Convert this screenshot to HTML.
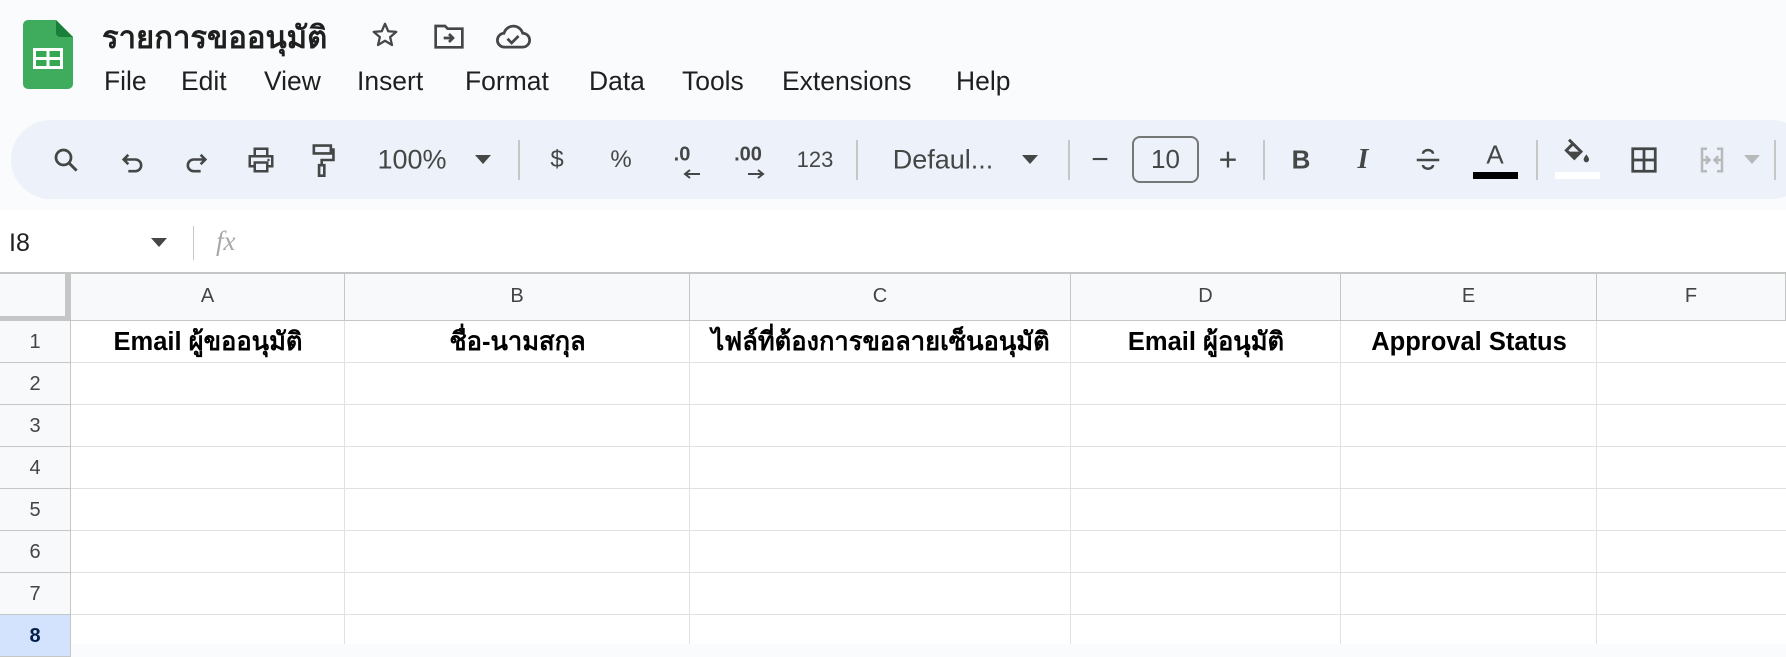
<!DOCTYPE html>
<html><head><meta charset="utf-8"><style>
*{margin:0;padding:0;box-sizing:border-box}
body{width:1786px;height:644px;overflow:hidden;background:#f9fbfd;font-family:"Liberation Sans","Noto Sans CJK SC",sans-serif;position:relative;color:#1f1f1f}
.a{position:absolute}
.menu span{position:absolute;top:66px;font-size:27px;color:#1f1f1f;transform:scaleX(.98);transform-origin:left}
.tb{position:absolute;left:11px;top:120px;width:1800px;height:79px;background:#edf2fa;border-radius:40px}
.ti{position:absolute;top:160px;transform:translate(-50%,-50%);color:#444746;font-size:25px}
.sep{position:absolute;top:140px;width:2px;height:40px;background:#c7c7c7}
svg{display:block}
.grid{position:absolute;left:0;top:272px;width:1786px;height:372px;background:#fff}
.ch{position:absolute;top:0;height:49px;background:#f8f9fa;border-right:1px solid #c4c7c5;border-bottom:1px solid #c4c7c5;text-align:center;line-height:48px;font-size:20px;color:#444}
.rh{position:absolute;left:0;width:71px;height:42px;background:#f8f9fa;border-bottom:1px solid #c4c7c5;border-right:1px solid #c4c7c5;text-align:center;line-height:42px;font-size:20px;color:#444}
.hl{position:absolute;height:1px;background:#e1e1e1;left:71px;right:0}
.vl{position:absolute;width:1px;background:#e1e1e1;top:49px;bottom:0}
.h1{position:absolute;top:49px;height:42px;line-height:42px;text-align:center;font-weight:bold;font-size:25.5px;color:#000}
</style></head><body>
<svg class="a" style="left:23px;top:20px" width="50" height="69" viewBox="0 0 50 69"><path d="M5 0H33L50 17V64a5 5 0 0 1-5 5H5a5 5 0 0 1-5-5V5a5 5 0 0 1 5-5z" fill="#34a853" opacity=".95"/><path d="M33 0L50 17H37a4 4 0 0 1-4-4z" fill="#188038"/><rect x="10" y="28" width="30" height="21" fill="#fff"/><rect x="13" y="31" width="10.5" height="6" fill="#34a853"/><rect x="26.5" y="31" width="10.5" height="6" fill="#34a853"/><rect x="13" y="40" width="10.5" height="6" fill="#34a853"/><rect x="26.5" y="40" width="10.5" height="6" fill="#34a853"/></svg>
<div class="a" style="left:102px;top:12px;font-size:31px;font-weight:bold;color:#1f1f1f">รายการขออนุมัติ</div>
<svg class="a" style="left:370px;top:20px" width="30" height="30" viewBox="0 0 24 24"><path d="M12 3l2.6 6 6.4.5-4.9 4.2 1.5 6.3L12 16.6 6.4 20l1.5-6.3L3 9.5l6.4-.5z" fill="none" stroke="#444746" stroke-width="1.8" stroke-linejoin="round"/></svg>
<svg class="a" style="left:433px;top:22px" width="32" height="28" viewBox="0 0 24 21"><path d="M2 3h7l2 2h11v14H2z" fill="none" stroke="#444746" stroke-width="2"/><path d="M8 12h7M12 9l3 3-3 3" fill="none" stroke="#444746" stroke-width="2"/></svg>
<svg class="a" style="left:495px;top:22px" width="36" height="28" viewBox="0 0 26 20"><path d="M7 18a5 5 0 0 1-.5-10A7 7 0 0 1 20 8a5 5 0 0 1 0 10z" fill="none" stroke="#444746" stroke-width="2"/><path d="M9 12l3 3 5-5" fill="none" stroke="#444746" stroke-width="2"/></svg>
<div class="menu"><span style="left:104px">File</span><span style="left:181px">Edit</span><span style="left:264px">View</span><span style="left:357px">Insert</span><span style="left:465px">Format</span><span style="left:589px">Data</span><span style="left:682px">Tools</span><span style="left:782px">Extensions</span><span style="left:956px">Help</span></div>
<div class="tb"></div>
<svg class="ti" style="left:66px" width="30" height="30" viewBox="0 0 24 24"><circle cx="10" cy="10" r="6" fill="none" stroke="#444746" stroke-width="2.2"/><path d="M14.5 14.5l6 6" stroke="#444746" stroke-width="2.4"/></svg>
<svg class="ti" style="left:133px;top:163px" width="28" height="28" viewBox="0 0 24 24"><path d="M8 5L4 9l4 4M4 9h10a5 5 0 0 1 0 10H8" fill="none" stroke="#444746" stroke-width="2.2"/></svg>
<svg class="ti" style="left:196px;top:163px" width="28" height="28" viewBox="0 0 24 24"><path d="M16 5l4 4-4 4M20 9H10a5 5 0 0 0 0 10h6" fill="none" stroke="#444746" stroke-width="2.2"/></svg>
<svg class="ti" style="left:261px" width="32" height="30" viewBox="0 0 24 24"><path d="M7 8V3h10v5M7 17H3V9h18v8h-4M7 14h10v7H7z" fill="none" stroke="#444746" stroke-width="2"/><circle cx="18" cy="12" r="1" fill="#444746"/></svg>
<svg class="ti" style="left:323px" width="28" height="34" viewBox="0 0 20 26"><path d="M3 2h13v6H3zM16 5h2v8H9v4M7 17h4v8H7z" fill="none" stroke="#444746" stroke-width="2"/></svg>
<div class="ti" style="left:412px;font-size:27px">100%</div>
<svg class="ti" style="left:483px" width="16" height="10" viewBox="0 0 16 10"><path d="M0 0h16L8 9z" fill="#444746"/></svg>
<div class="sep" style="left:518px"></div>
<div class="ti" style="left:557px;font-size:24px">$</div>
<div class="ti" style="left:621px;font-size:24px">%</div>
<div class="ti" style="left:682px;font-size:20px;font-weight:bold;top:155px">.0</div>
<svg class="ti" style="left:692px;top:174px" width="18" height="10" viewBox="0 0 18 10"><path d="M17 5H3M7 1L2 5l5 4" fill="none" stroke="#444746" stroke-width="2"/></svg>
<div class="ti" style="left:748px;font-size:20px;font-weight:bold;top:155px">.00</div>
<svg class="ti" style="left:756px;top:174px" width="18" height="10" viewBox="0 0 18 10"><path d="M1 5h14M11 1l5 4-5 4" fill="none" stroke="#444746" stroke-width="2"/></svg>
<div class="ti" style="left:815px;font-size:22px">123</div>
<div class="sep" style="left:856px"></div>
<div class="ti" style="left:943px;font-size:27px">Defaul...</div>
<svg class="ti" style="left:1030px" width="16" height="10" viewBox="0 0 16 10"><path d="M0 0h16L8 9z" fill="#444746"/></svg>
<div class="sep" style="left:1068px"></div>
<div class="ti" style="left:1100px;font-size:30px">−</div>
<div class="a" style="left:1132px;top:136px;width:67px;height:47px;border:2px solid #747775;border-radius:8px;text-align:center;line-height:43px;font-size:26px;color:#444746">10</div>
<div class="ti" style="left:1228px;font-size:32px">+</div>
<div class="sep" style="left:1263px"></div>
<div class="ti" style="left:1301px;font-size:26px;font-weight:bold">B</div>
<div class="ti" style="left:1363px;font-size:28px;font-weight:bold;font-style:italic;font-family:'Liberation Serif',serif">I</div>
<svg class="ti" style="left:1428px" width="30" height="30" viewBox="0 0 24 24"><path d="M3 12h18M8 7a4 3 0 0 1 8 0M8 16a4 3 0 0 0 8 0" fill="none" stroke="#444746" stroke-width="2"/></svg>
<div class="ti" style="left:1495px;font-size:26px;top:155px">A</div>
<div class="a" style="left:1473px;top:172px;width:45px;height:7px;background:#000"></div>
<div class="sep" style="left:1536px"></div>
<svg class="ti" style="left:1577px;top:153px" width="32" height="32" viewBox="0 0 24 24"><path d="M6 2l9 9-5 5-6-6 5-5" fill="none" stroke="#444746" stroke-width="2.2"/><path d="M5 11h11l-6 5z" fill="#444746"/><path d="M19 13c1.5 2 2 3 2 4a2 2 0 0 1-4 0c0-1 .5-2 2-4z" fill="#444746"/></svg>
<div class="a" style="left:1555px;top:172px;width:45px;height:7px;background:#fff"></div>
<svg class="ti" style="left:1644px" width="30" height="30" viewBox="0 0 24 24"><path d="M3 3h18v18H3zM12 3v18M3 12h18" fill="none" stroke="#444746" stroke-width="2.2"/></svg>
<svg class="ti" style="left:1712px" width="30" height="30" viewBox="0 0 24 24"><path d="M8 3H4v18h4M16 3h4v18h-4M4 12h6M7 9l3 3-3 3M20 12h-6M17 9l-3 3 3 3" fill="none" stroke="#b7b9bb" stroke-width="2"/></svg>
<svg class="ti" style="left:1752px" width="16" height="10" viewBox="0 0 16 10"><path d="M0 0h16L8 9z" fill="#b7b9bb"/></svg>
<div class="sep" style="left:1774px"></div>
<div class="a" style="left:0;top:210px;width:1786px;height:62px;background:#fff"></div>
<div class="a" style="left:9px;top:229px;font-size:25px;color:#1f1f1f">I8</div>
<svg class="a" style="left:151px;top:238px" width="16" height="10" viewBox="0 0 16 10"><path d="M0 0h16L8 9z" fill="#444746"/></svg>
<div class="a" style="left:193px;top:226px;width:1px;height:34px;background:#c7c7c7"></div>
<div class="a" style="left:216px;top:226px;font-size:27px;color:#a8a8a8;font-style:italic;font-family:'Liberation Serif',serif">fx</div>
<div class="grid">
 <div class="a" style="left:0;top:0;width:71px;height:49px;background:#f8f9fa;border-right:6px solid #c4c7c5;border-bottom:5px solid #c4c7c5"></div>
 <div class="ch" style="left:71px;width:274px">A</div>
 <div class="ch" style="left:345px;width:345px">B</div>
 <div class="ch" style="left:690px;width:381px">C</div>
 <div class="ch" style="left:1071px;width:270px">D</div>
 <div class="ch" style="left:1341px;width:256px">E</div>
 <div class="ch" style="left:1597px;width:189px">F</div>
 <div class="a" style="left:0;top:0;width:1786px;height:2px;background:#c4c7c5"></div>
 <div class="rh" style="top:49px">1</div>
 <div class="rh" style="top:91px">2</div>
 <div class="rh" style="top:133px">3</div>
 <div class="rh" style="top:175px">4</div>
 <div class="rh" style="top:217px">5</div>
 <div class="rh" style="top:259px">6</div>
 <div class="rh" style="top:301px">7</div>
 <div class="rh" style="top:343px;background:#d3e3fd;font-weight:bold;color:#041e49">8</div>
 <div class="hl" style="top:90px"></div><div class="hl" style="top:132px"></div><div class="hl" style="top:174px"></div><div class="hl" style="top:216px"></div><div class="hl" style="top:258px"></div><div class="hl" style="top:300px"></div><div class="hl" style="top:342px"></div>
 <div class="vl" style="left:344px"></div><div class="vl" style="left:689px"></div><div class="vl" style="left:1070px"></div><div class="vl" style="left:1340px"></div><div class="vl" style="left:1596px"></div>
 <div class="h1" style="left:71px;width:274px">Email ผู้ขออนุมัติ</div>
 <div class="h1" style="left:345px;width:345px">ชื่อ-นามสกุล</div>
 <div class="h1" style="left:690px;width:381px">ไฟล์ที่ต้องการขอลายเซ็นอนุมัติ</div>
 <div class="h1" style="left:1071px;width:270px">Email ผู้อนุมัติ</div>
 <div class="h1" style="left:1341px;width:256px">Approval Status</div>
</div>
</body></html>
